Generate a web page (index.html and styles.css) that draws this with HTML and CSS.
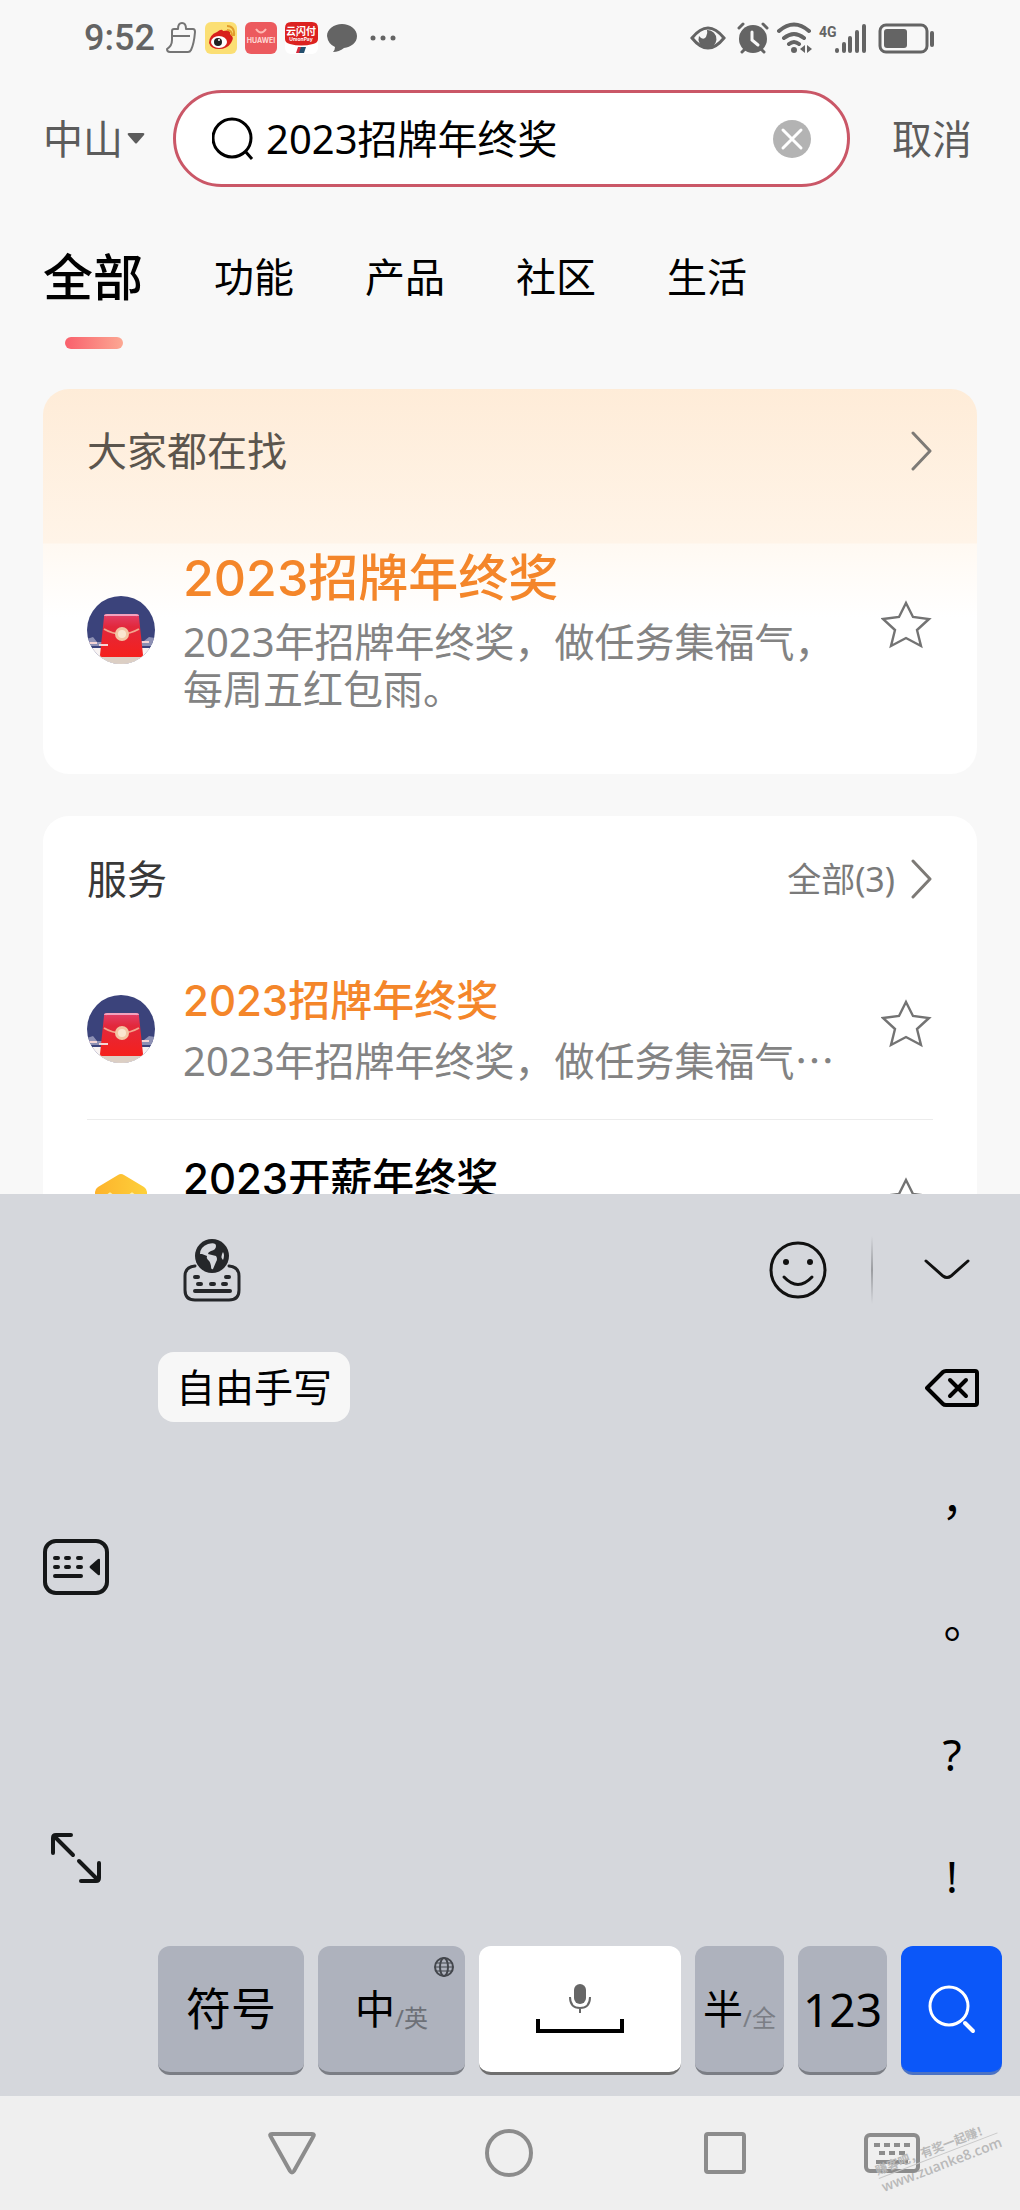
FILE: index.html
```html
<!DOCTYPE html>
<html lang="zh-CN">
<head>
<meta charset="utf-8">
<meta name="viewport" content="width=device-width, initial-scale=1">
<title>搜索</title>
<link rel="stylesheet" href="styles.css">
</head>
<body>
<svg class="defs" aria-hidden="true">
  <defs>
    <linearGradient id="red" x1="0" y1="0" x2="0" y2="1"><stop offset="0" stop-color="#e2406a"/><stop offset=".3" stop-color="#e2283c"/><stop offset="1" stop-color="#f5201c"/></linearGradient>
    <linearGradient id="gold" x1="0" y1="0" x2="1" y2="0"><stop offset="0" stop-color="#fdb32c"/><stop offset="1" stop-color="#fdd03a"/></linearGradient>
    <linearGradient id="cream" x1="0" y1="0" x2="0" y2="1"><stop offset="0" stop-color="#fff1a8"/><stop offset="1" stop-color="#fedc55"/></linearGradient>
    <clipPath id="disc"><circle cx="34" cy="34" r="34"/></clipPath>
  </defs>
  <symbol id="envelope" viewBox="0 0 68 68">
    <g clip-path="url(#disc)">
      <rect width="68" height="68" fill="#3b437b"/>
      <path d="M0 52h68v16H0z" fill="#f8f3f2"/>
      <path d="M0 43l6-2 4 5h12v5H0zM68 42l-6-1-5 4h-9v6h20z" fill="#8d90b4"/>
      <path d="M0 51h68" stroke="#3b437b" stroke-width="2"/>
      <path d="M8 60q26-5 52 0l-8 8H16z" fill="#dccfc4"/>
      <path d="M20 18h29q3 0 3 3l4 38q0 2-2 2H15q-2 0-2-2l4-38q0-3 3-3z" fill="url(#red)"/>
      <path d="M18 20q0-1 2-1h29q2 0 2 1" fill="none" stroke="#f3a2bd" stroke-width="2"/>
      <path d="M17 33q17 10 35 0" fill="none" stroke="#f2a58c" stroke-width="2"/>
      <circle cx="35" cy="38" r="7" fill="#f3c5a3"/><circle cx="35" cy="38" r="4" fill="#fae6d0"/>
      <path d="M2 47h8M12 49h9M55 46h7" stroke="#f4d5d5" stroke-width="2"/>
    </g>
  </symbol>
  <symbol id="star" viewBox="0 0 52 68">
    <path d="M25 7l7 14 16 2-12 11 4 16-15-8-15 8 4-16L2 23l16-2z" fill="none" stroke="#737373" stroke-width="2.4"/>
  </symbol>
  <symbol id="chevron" viewBox="0 0 24 40">
    <path d="M4 2l17 18L4 38" fill="none" stroke="#7d7a76" stroke-width="3" stroke-linecap="round" stroke-linejoin="round"/>
  </symbol>
</svg>

<main class="app">
  <header class="status">
    <span class="time">9:52</span>
    <svg width="31" height="34" viewBox="0 0 31 34" fill="none" stroke="#757575" stroke-width="2" stroke-linejoin="round"><path d="M12 8q0-6 4-6t4 6h7q2 0 2 3-1 12-4 18-1 2-3 2H4q-3 0-3-3 5-3 5-9v-9q0-2 2-2zM7 15h17"/></svg>
    <svg width="32" height="34" viewBox="0 0 32 34"><rect y="1" width="32" height="32" rx="6" fill="#fbdf74"/><path d="M4 22q0-8 8-11 5-4 6-1 8-2 7 3 5 3 1 9-4 6-12 6T4 22z" fill="#d8201c"/><ellipse cx="14" cy="21" rx="8" ry="6" fill="#fff"/><circle cx="13" cy="21" r="4" fill="#222"/><circle cx="14" cy="19" r="1" fill="#fff"/><path d="M22 9q5 0 5 6M22 5q8 0 7 10" stroke="#e29b2c" stroke-width="2" fill="none"/></svg>
    <svg width="32" height="34" viewBox="0 0 32 34"><rect y="1" width="32" height="32" rx="6" fill="#ec5a5e"/><path d="M11 8q5 7 10 0" fill="none" stroke="#ffb9b4" stroke-width="2"/><text class="huawei" x="16" y="22" text-anchor="middle">HUAWEI</text></svg>
    <svg width="33" height="34" viewBox="0 0 33 34"><rect y="1" width="33" height="32" rx="6" fill="#fff"/><path d="M6 1h21q6 0 6 6v11q0 4-5 5-12 3-23 0-5-1-5-5V7q0-6 6-6z" fill="#dc2220"/><path d="M13 26h4l-2 6h-4z" fill="#d92a3c"/><path d="M16 26h5l-2 6h-5z" fill="#24506e"/><text class="unionpay" x="16" y="14" text-anchor="middle">云闪付</text><text class="unionsub" x="16" y="20" text-anchor="middle">UnionPay</text></svg>
    <svg width="32" height="34" viewBox="0 0 32 34"><path d="M16 3c8 0 15 5 15 12s-6 11-13 12q-5 4-11 4 2-2 2-5-7-3-8-11C1 8 8 3 16 3z" fill="#646464"/></svg>
    <svg class="dots" width="26" height="34" viewBox="0 0 26 34" fill="#646464"><circle cx="3" cy="17" r="2.5"/><circle cx="13" cy="17" r="2.5"/><circle cx="23" cy="17" r="2.5"/></svg>
    <svg class="push" width="36" height="34" viewBox="0 0 36 34"><path d="M2 17Q18-3 34 17 18 37 2 17z" fill="none" stroke="#646464" stroke-width="3"/><path d="M17 9a9 9 0 1 1-8 6q4 5 7 1 2-4 1-7z" fill="#646464"/></svg>
    <svg class="alarm" width="32" height="34" viewBox="0 0 32 34"><circle cx="16" cy="18" r="14" fill="#646464"/><path d="M2 7l4-4M30 7l-4-4M5 31l4-4M27 31l-4-4" stroke="#646464" stroke-width="3" stroke-linecap="round"/><path d="M15 11v8l6 5" fill="none" stroke="#f8f8f8" stroke-width="3" stroke-linecap="round"/></svg>
    <svg class="wifi" width="36" height="34" viewBox="0 0 36 34" fill="none" stroke="#646464" stroke-width="4" stroke-linecap="round"><path d="M2 10Q17-3 32 10M7 17q10-8 20 0M12 23q5-4 10 0"/><circle cx="17" cy="29" r="3" fill="#646464" stroke="none"/><path d="M23 28l5-4v8zM35 28l-5-4v8z" fill="#646464" stroke="none"/></svg>
    <svg class="signal" width="50" height="34" viewBox="0 0 50 34"><text class="net" x="1" y="16">4G</text><path d="M19 30v-1M26 30v-7M32 30v-13M39 30V11M46 30V5" stroke="#646464" stroke-width="4" stroke-linecap="round"/></svg>
    <svg class="battery" width="58" height="34" viewBox="0 0 58 34"><rect x="2" y="4" width="47" height="27" rx="6" fill="none" stroke="#646464" stroke-width="3"/><rect x="6" y="8" width="23" height="19" rx="3" fill="#646464"/><path d="M54 12v12" stroke="#646464" stroke-width="4" stroke-linecap="round"/></svg>
  </header>

  <form class="search">
    <button type="button" class="city">中山<svg width="18" height="12" viewBox="0 0 18 12"><path d="M2 0h14q2 0 1 2l-7 8q-1 1-2 0L1 2Q0 0 2 0z" fill="#5c5c5c"/></svg></button>
    <label class="field">
      <svg width="44" height="44" viewBox="0 0 44 44" fill="none" stroke="#000" stroke-width="3"><circle cx="20" cy="21" r="19"/><path d="M33 34l7 8"/></svg>
      <input type="text" value="2023招牌年终奖" aria-label="搜索">
      <button type="button" class="clear" aria-label="清除"><svg width="38" height="38" viewBox="0 0 38 38"><circle cx="19" cy="19" r="19" fill="#b3b3b3"/><path d="M10 10l18 18M28 10L10 28" stroke="#fff" stroke-width="3" stroke-linecap="round"/></svg></button>
    </label>
    <button type="button" class="cancel">取消</button>
  </form>

  <nav class="tabs">
    <a class="tab active" href="#all">全部</a>
    <a class="tab" href="#features">功能</a>
    <a class="tab" href="#products">产品</a>
    <a class="tab" href="#community">社区</a>
    <a class="tab" href="#life">生活</a>
  </nav>

  <section class="card hot">
    <header class="card-head">
      <h2>大家都在找</h2>
      <a href="#hot" aria-label="更多"><svg width="24" height="40"><use href="#chevron"/></svg></a>
    </header>
    <article class="item">
      <svg width="68" height="68"><use href="#envelope"/></svg>
      <div class="body">
        <h3>2023招牌年终奖</h3>
        <p>2023年招牌年终奖，做任务集福气，每周五红包雨。</p>
      </div>
      <button type="button" aria-label="收藏"><svg width="52" height="68"><use href="#star"/></svg></button>
    </article>
  </section>

  <section class="card service">
    <header class="card-head">
      <h2>服务</h2>
      <a href="#service">全部(3)<svg width="24" height="40"><use href="#chevron"/></svg></a>
    </header>
    <article class="item">
      <svg width="68" height="68"><use href="#envelope"/></svg>
      <div class="body">
        <h3>2023招牌年终奖</h3>
        <p>2023年招牌年终奖，做任务集福气<span class="more">…</span></p>
      </div>
      <button type="button" aria-label="收藏"><svg width="52" height="68"><use href="#star"/></svg></button>
    </article>
    <article class="item plain">
      <svg width="68" height="68" viewBox="0 0 68 68"><path d="M31 2q3-2 6 0l20 12q3 2 3 5v28q0 3-3 4L37 64q-3 2-6 0L11 51q-3-1-3-4V19q0-3 3-5z" fill="url(#gold)"/><path d="M19 24l4-3 4 3M41 24l4-3 4 3" stroke="url(#cream)" stroke-width="3" fill="none"/></svg>
      <div class="body">
        <h3>2023开薪年终奖</h3>
        <p>&nbsp;</p>
      </div>
      <button type="button" aria-label="收藏"><svg width="52" height="68"><use href="#star"/></svg></button>
    </article>
  </section>
</main>

<section class="keyboard" aria-label="键盘">
  <div class="toolbar">
    <button type="button" aria-label="输入法"><svg width="58" height="64" viewBox="0 0 58 64"><path d="M12 28q-10 1-10 10v14q0 10 10 10h34q10 0 10-10V38q0-9-10-10" fill="none" stroke="#25272a" stroke-width="3" stroke-linecap="round"/><circle cx="29" cy="18" r="17" fill="#25272a"/><path d="M17 16q0-7 8-10 8-2 8 2 0 4-5 5-3 1-3 3l8 2q2 3 0 6l-3 7q-2 1-2-3-1-5-3-6-2-2-1-4l-5-2z" fill="#d6d8dd"/><path d="M40 14q2 3 0 8-3-3 0-8z" fill="#d6d8dd"/><path d="M12 39h3M43 39h3M15 46h3M28 46h3M40 46h3M12 53h35" stroke="#25272a" stroke-width="4" stroke-linecap="round"/></svg></button>
    <button type="button" class="emoji" aria-label="表情"><svg width="58" height="58" viewBox="0 0 58 58" fill="none" stroke="#111" stroke-width="3" stroke-linecap="round"><circle cx="29" cy="29" r="27"/><circle cx="17" cy="21" r="3" fill="#111" stroke="none"/><circle cx="41" cy="21" r="3" fill="#111" stroke="none"/><path d="M15 36q14 15 28 0"/></svg></button>
    <span class="rule"></span>
    <button type="button" class="fold" aria-label="收起"><svg width="46" height="24" viewBox="0 0 46 24"><path d="M2 3l17 15q4 3 8 0L44 3" fill="none" stroke="#111" stroke-width="3" stroke-linecap="round"/></svg></button>
  </div>

  <div class="pad">
    <div class="rail">
      <button type="button" aria-label="切换键盘"><svg width="66" height="56" viewBox="0 0 66 56"><rect x="2" y="2" width="62" height="52" rx="11" fill="none" stroke="#151718" stroke-width="4"/><path d="M12 19h3M23 19h3M35 19h3M12 28h3M23 28h3M35 28h3M12 37h26" stroke="#151718" stroke-width="4" stroke-linecap="round"/><path d="M47 27l8-7q2-1 2 1v14q0 2-2 1l-8-7q-1-1 0-2z" fill="#151718"/></svg></button>
      <button type="button" aria-label="展开"><svg width="50" height="50" viewBox="0 0 50 50" fill="none" stroke="#151718" stroke-width="4" stroke-linecap="round" stroke-linejoin="round"><path d="M20 2H5Q2 2 2 5v15M4 4l18 18M30 48h15q3 0 3-3V30M46 46L28 28"/></svg></button>
    </div>
    <div class="writing"><button type="button" class="candidate">自由手写</button></div>
    <div class="marks">
      <button type="button" aria-label="删除"><svg width="54" height="38" viewBox="0 0 54 38" fill="none" stroke="#000" stroke-width="4" stroke-linecap="round" stroke-linejoin="round"><path d="M2 19L18 3q1-1 3-1h29q2 0 2 2v30q0 2-2 2H21q-2 0-3-1z"/><path d="M25 11l16 16M41 11L25 27"/></svg></button>
      <button type="button" class="wide" lang="zh-TW">，</button>
      <button type="button" class="wide" lang="zh-TW">。</button>
      <button type="button">?</button>
      <button type="button">!</button>
    </div>
  </div>

  <div class="keys">
    <button type="button" class="key symbol">符号</button>
    <button type="button" class="key lang">中<small>/英</small><svg width="22" height="22" viewBox="0 0 22 22" fill="none" stroke="#43464c" stroke-width="2"><circle cx="11" cy="11" r="9"/><ellipse cx="11" cy="11" rx="4" ry="9"/><path d="M3 7h16M2 11h18M3 15h16" stroke-width="1"/></svg></button>
    <button type="button" class="key space" aria-label="空格"><svg width="88" height="50" viewBox="0 0 88 50"><rect x="38" y="0" width="12" height="20" rx="6" fill="#666"/><path d="M34 13q0 11 10 11t10-11M44 24v5" fill="none" stroke="#666" stroke-width="2"/><path d="M2 35v12h84V35" fill="none" stroke="#000" stroke-width="4"/></svg></button>
    <button type="button" class="key">半<small class="thin">/全</small></button>
    <button type="button" class="key number">123</button>
    <button type="button" class="key go" aria-label="搜索"><svg width="50" height="50" viewBox="0 0 50 50" fill="none" stroke="#fff" stroke-width="3" stroke-linecap="round"><circle cx="22" cy="22" r="19"/><path d="M38 39l8 8" stroke-width="4"/></svg></button>
  </div>
</section>

<footer class="navbar">
  <button type="button" aria-label="返回"><svg width="48" height="48" viewBox="0 0 48 48"><path d="M4 5h40q3 0 1 3L26 42q-2 3-4 0L3 8Q1 5 4 5z" fill="none" stroke="#8c8c8c" stroke-width="4"/></svg></button>
  <button type="button" aria-label="主页"><svg width="48" height="48" viewBox="0 0 48 48"><circle cx="24" cy="24" r="22" fill="none" stroke="#8c8c8c" stroke-width="4"/></svg></button>
  <button type="button" aria-label="最近"><svg width="48" height="48" viewBox="0 0 48 48"><rect x="5" y="5" width="38" height="38" rx="2" fill="none" stroke="#8c8c8c" stroke-width="4"/></svg></button>
  <button type="button" class="ime" aria-label="键盘"><svg width="58" height="48" viewBox="0 0 58 48"><rect x="3" y="6" width="52" height="36" rx="4" fill="none" stroke="#8c8c8c" stroke-width="4"/><path d="M11 16h6M21 16h6M31 16h6M41 16h6M16 24h6M26 24h6M36 24h6M13 33h32" stroke="#8c8c8c" stroke-width="4"/></svg></button>
  <p class="watermark"><span>赚客吧，有奖一起赚！</span><span>www.zuanke8.com</span></p>
</footer>
</body>
</html>
```
FILE: styles.css
```css
* { box-sizing: border-box; margin: 0; padding: 0; }

body {
  display: flex;
  flex-direction: column;
  height: 100vh;
  overflow: hidden;
  background: #f8f8f8;
  color: #000;
  font: 40px/48px "Noto Sans", "Noto Sans CJK SC", sans-serif;
}

button {
  display: inline-flex;
  align-items: center;
  justify-content: center;
  border: 0;
  background: none;
  color: inherit;
  font: inherit;
}

a { color: inherit; text-decoration: none; }
svg { display: block; flex: none; }
.defs { position: absolute; width: 0; height: 0; }

.app { flex: 1; min-height: 0; overflow: hidden; }

/* Status bar */
.status {
  display: flex;
  align-items: center;
  gap: 8px;
  height: 76px;
  padding: 0 84px;
}
.time { color: #646464; font: 500 36px/40px Roboto, sans-serif; margin-right: 3px; }
.dots { margin-left: 4px; }
.push { margin-left: auto; }
.alarm { margin-left: 3px; }
.signal { margin: 0 2px 0 -3px; }
.huawei { fill: #ffd9d6; font: 700 7px Inter, sans-serif; }
.unionpay { fill: #fff; font: 700 10px "Noto Sans CJK SC", sans-serif; }
.unionsub { fill: #fff; font: 700 5px Inter, sans-serif; }
.net { fill: #646464; font: 700 14px Roboto, sans-serif; }

/* Search row */
.search {
  display: flex;
  align-items: center;
  margin-top: 14px;
  padding: 0 48px 0 43px;
}
.city, .cancel { color: #5c5c5c; white-space: nowrap; }
.city { gap: 4px; }
.field {
  display: flex;
  flex: 1;
  align-items: center;
  gap: 10px;
  min-width: 0;
  height: 97px;
  margin: 0 42px 0 28px;
  padding: 0 36px;
  border: 3px solid #ca5767;
  border-radius: 49px;
  background: #fff;
}
.field input {
  flex: 1;
  min-width: 0;
  height: 48px;
  border: 0;
  outline: 0;
  background: none;
  color: #000;
  font: inherit;
}

/* Tabs */
.tabs {
  display: flex;
  gap: 71px;
  margin-top: 44px;
  padding: 0 43px;
  line-height: 92px;
}
.active { font-size: 50px; font-weight: 500; }
.active::after {
  content: "";
  display: block;
  width: 58px;
  height: 12px;
  margin: 14px auto 0 22px;
  border-radius: 6px;
  background: linear-gradient(90deg, #f9606c, #fca893);
}

/* Result cards */
.card { margin: 40px 43px 0; border-radius: 26px; background: #fff; }
.hot {
  padding-bottom: 62px;
  background: linear-gradient(#feecd8, #fff4e8 154px, #fff9f2 155px, #fff 228px);
}
.service { margin-top: 42px; }
.card-head {
  display: flex;
  align-items: center;
  justify-content: space-between;
  height: 124px;
  margin: 0 44px;
}
.card-head h2 { color: #5b554d; font-size: 40px; font-weight: 400; }
.service .card-head { height: 126px; }
.service h2 { color: #383838; }
.card-head a { display: flex; align-items: center; gap: 14px; color: #7a7a7a; font-size: 34px; }

.item { display: flex; align-items: center; gap: 28px; margin: 0 44px; padding-top: 35px; }
.body { flex: 1; min-width: 0; }
.item h3 {
  margin-bottom: 10px;
  color: #f4862a;
  font: 500 50px/60px Inter, "Noto Sans CJK SC", sans-serif;
}
.item p { color: #838383; line-height: 47px; }
.service .item { padding: 32px 0 35px; border-bottom: 1px solid #ececec; }
.service h3 { font-size: 42px; line-height: 54px; margin-bottom: 8px; }
.service .plain h3 { color: #000; }
.service p { white-space: nowrap; }
.more { font-family: "Noto Sans CJK SC", sans-serif; }

/* Handwriting keyboard */
.keyboard { background: #d5d7dc; }
.toolbar { display: flex; align-items: center; height: 133px; padding: 19px 50px 0 183px; }
.emoji { margin-left: auto; }
.rule {
  width: 2px;
  height: 68px;
  margin: 0 51px 0 44px;
  background: linear-gradient(#d5d7dc, #9b9da1, #d5d7dc);
}
.pad { display: flex; height: 610px; }
.rail { display: flex; flex-direction: column; align-items: center; gap: 238px; width: 158px; padding: 212px 6px 0 0; }
.writing { flex: 1; padding-top: 25px; }
.candidate { height: 70px; padding: 0 18px; border-radius: 16px; background: #f7f7f7; font-size: 39px; }
.marks { display: flex; flex-direction: column; width: 136px; font-size: 44px; }
.marks button { flex: 1; }
.marks .wide { font-family: "Noto Sans CJK TC", sans-serif; }
.keys {
  display: grid;
  grid-template-columns: 146fr 147fr 202fr 89fr 89fr 101fr;
  gap: 14px;
  padding: 9px 18px 21px 158px;
}
.key {
  position: relative;
  height: 129px;
  border-bottom: 3px solid #7b7e85;
  border-radius: 12px;
  background: #aeb2bd;
  white-space: nowrap;
}
.key small { align-self: flex-end; padding-bottom: 36px; color: #6d7077; font-size: 24px; line-height: 36px; }
.key .thin { color: #7b7e85; }
.symbol { font-size: 45px; }
.lang svg { position: absolute; top: 10px; right: 10px; }
.space { background: #fff; border-color: #6f6f6f; }
.number { font-size: 46px; }
.go { background: #0b57f9; border-color: #4b72c4; }

/* System navigation */
.navbar {
  position: relative;
  display: grid;
  grid-template-columns: repeat(3, 216fr) 116fr;
  height: 114px;
  padding: 0 70px 0 184px;
  background: #efefef;
}
.watermark {
  position: absolute;
  right: 18px;
  bottom: 36px;
  display: flex;
  flex-direction: column;
  transform: rotate(-21deg);
  color: #b9b9b9;
  font: 700 12px/16px "Noto Sans CJK SC", sans-serif;
}
.watermark span:last-child { border-top: 1px solid #c8c8c8; font: 600 14px/18px "Open Sans", sans-serif; }
```
